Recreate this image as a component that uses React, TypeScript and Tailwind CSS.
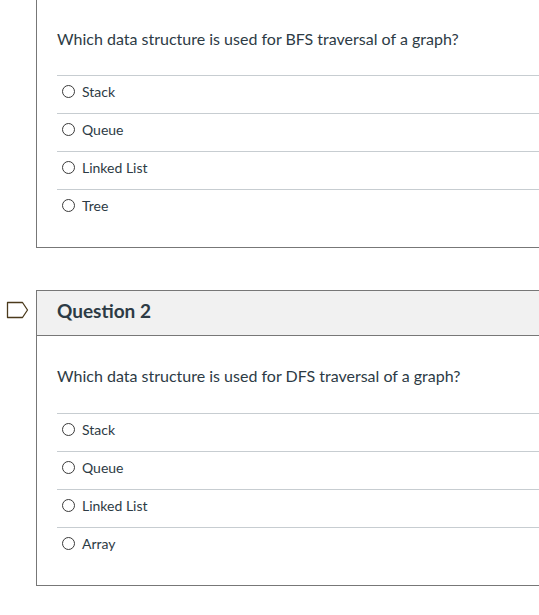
const font = { fontFamily: "Lato, 'Open Sans', sans-serif" };

type Q = { title?: string; prompt: string; options: string[] };

function Radio() {
  return <span className="inline-block w-[13px] h-[13px] rounded-full border border-[#3a3a3a] bg-white mr-[7px] shrink-0" />;
}

function Options({ items }: { items: string[] }) {
  return (
    <div>
      {items.map((o) => (
        <div key={o} className="h-[38px] border-t border-[#c7cdd1] flex items-center pb-[6px] pl-[5px] text-[14px] text-[#2d3b45]">
          <Radio />
          <span>{o}</span>
        </div>
      ))}
    </div>
  );
}

function QuestionBox({ q, top }: { q: Q; top?: boolean }) {
  return (
    <div className={`ml-[36px] border-l border-b border-[#777] ${top ? "" : "border-t"} bg-white`}>
      {q.title && (
        <div className="h-[45px] bg-[#f1f1f1] border-b border-[#777] flex items-center pl-[20px] pb-[3px]">
          <h2 className="text-[19px] font-bold text-[#2d3b45]">{q.title}</h2>
        </div>
      )}
      <div className={`pl-[20px] pb-[20px] ${q.title ? "pt-[29px]" : "pt-[28px]"}`}>
        <p className={`text-[16px] leading-[22px] text-[#2d3b45] ${q.title ? "mb-[26px]" : "mb-[25px]"}`}>{q.prompt}</p>
        <Options items={q.options} />
      </div>
    </div>
  );
}

export default function App() {
  return (
    <div className="relative w-[539px] h-[615px] bg-white overflow-hidden" style={font}>
      <QuestionBox
        top
        q={{
          prompt: "Which data structure is used for BFS traversal of a graph?",
          options: ["Stack", "Queue", "Linked List", "Tree"],
        }}
      />
      <div className="relative mt-[42px]">
        {/* flag marker */}
        <svg className="absolute left-[6px] top-[11px]" width="23" height="18" viewBox="0 0 23 18">
          <path d="M1.5 1.5 H16.5 L21.5 9 L16.5 16.5 H1.5 Z" fill="none" stroke="#4b3a1c" strokeWidth="1.3" strokeLinejoin="round" />
        </svg>
        <QuestionBox
          q={{
            title: "Question 2",
            prompt: "Which data structure is used for DFS traversal of a graph?",
            options: ["Stack", "Queue", "Linked List", "Array"],
          }}
        />
      </div>
    </div>
  );
}
